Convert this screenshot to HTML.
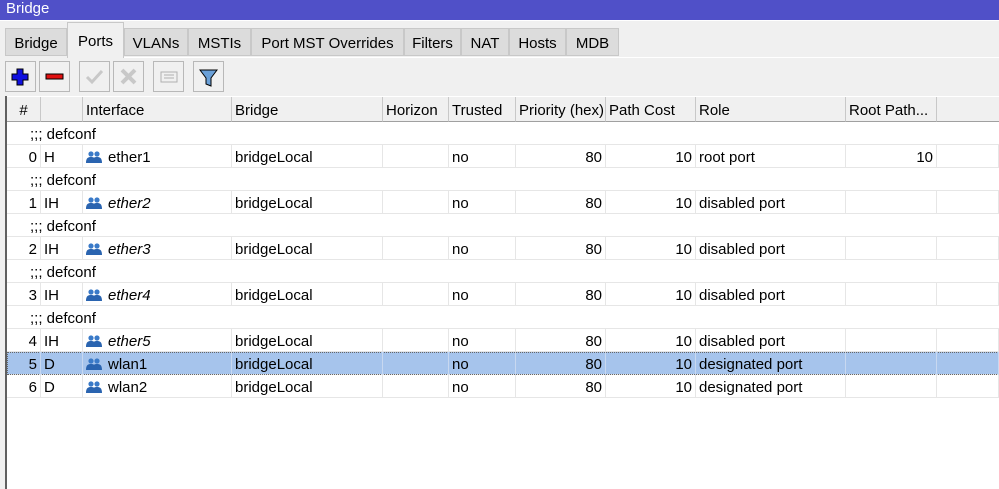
<!DOCTYPE html><html><head><style>
body{margin:0;width:999px;height:489px;background:#f0f0f0;font-family:"Liberation Sans",sans-serif;font-size:15px;color:#000;position:relative;overflow:hidden}
.a{position:absolute;white-space:nowrap}
.title{left:0;top:0;width:999px;height:20px;background:#5050c8;color:#fff;font-size:15px;line-height:18px;padding-left:6px;box-sizing:border-box}
.tab{top:28px;height:28px;background:#dcdcdc;border:1px solid #c8c8c8;line-height:30px;text-align:center;box-sizing:border-box}
.tb{top:61px;width:31px;height:31px;border:1px solid #b8b8b8;box-sizing:border-box;background:#f0f0f0}
.grid{left:5px;top:96px;width:994px;height:393px;background:#fff;border-left:2px solid #606060}
.h{top:97px;height:25px;line-height:27px;background:#f0f0f0;border-right:1px solid #c8c8c8;border-bottom:1px solid #a0a0a0;box-sizing:border-box;padding-left:3px}
.r{left:7px;width:992px;height:23px;border-bottom:1px solid #e6e6e6;box-sizing:border-box}
.c{height:23px;line-height:25px;border-right:1px solid #e6e6e6;box-sizing:border-box;padding:0 3px;overflow:hidden}
.ic{display:inline-block;width:16px;height:12px;vertical-align:-1px;margin-right:6px}
</style></head><body>
<div class="a title">Bridge</div>
<div class="a" style="left:0;top:20px;width:999px;height:1px;background:#fff"></div>
<div class="a tab" style="left:5px;width:62px">Bridge</div>
<div class="a tab" style="left:67px;top:22px;height:36px;width:57px;background:#f0f0f0;border-bottom:none;line-height:38px">Ports</div>
<div class="a tab" style="left:124px;width:64px">VLANs</div>
<div class="a tab" style="left:188px;width:63px">MSTIs</div>
<div class="a tab" style="left:251px;width:153px">Port MST Overrides</div>
<div class="a tab" style="left:404px;width:57px">Filters</div>
<div class="a tab" style="left:461px;width:48px">NAT</div>
<div class="a tab" style="left:509px;width:57px">Hosts</div>
<div class="a tab" style="left:566px;width:53px">MDB</div>
<div class="a" style="left:124px;top:57px;width:875px;height:1px;background:#fff"></div>
<div class="a tb" style="left:5px"><svg width="29" height="29"><path d="M11 7h6v5h5v6h-5v5h-6v-5H6v-6h5z" fill="#1010e0" stroke="#000" stroke-width="1"/></svg></div>
<div class="a tb" style="left:39px"><svg width="29" height="29"><rect x="6" y="12" width="17" height="5" fill="#e01010" stroke="#000"/></svg></div>
<div class="a tb" style="left:79px"><svg width="29" height="29"><path d="M7 15l5 5 10-11" fill="none" stroke="#c8c8c8" stroke-width="3"/></svg></div>
<div class="a tb" style="left:113px"><svg width="29" height="29"><path d="M8 8l13 13M21 8L8 21" stroke="#c8c8c8" stroke-width="4"/></svg></div>
<div class="a tb" style="left:153px"><svg width="29" height="29"><rect x="7" y="10" width="16" height="10" fill="none" stroke="#b0b0b0"/><path d="M10 13h10M10 16h10" stroke="#b0b0b0"/></svg></div>
<div class="a tb" style="left:193px"><svg width="29" height="29"><path d="M6 8h17l-6 8v8l-5-2v-6z" fill="#6aa0d8" stroke="#000"/></svg></div>
<div class="a grid"></div>
<div class="a h" style="left:7px;width:34px;text-align:center;padding:0">#</div>
<div class="a h" style="left:41px;width:42px"></div>
<div class="a h" style="left:83px;width:149px">Interface</div>
<div class="a h" style="left:232px;width:151px">Bridge</div>
<div class="a h" style="left:383px;width:66px">Horizon</div>
<div class="a h" style="left:449px;width:67px">Trusted</div>
<div class="a h" style="left:516px;width:90px">Priority (hex)</div>
<div class="a h" style="left:606px;width:90px">Path Cost</div>
<div class="a h" style="left:696px;width:150px">Role</div>
<div class="a h" style="left:846px;width:91px">Root Path...</div>
<div class="a h" style="left:937px;width:62px;border-right:none"></div>
<div id="rows"></div>
<script>
var ic='<svg class="ic" viewBox="0 0 16 12"><circle cx="5" cy="3" r="2.6" fill="#3a7ac8"/><circle cx="11" cy="3" r="2.6" fill="#3a7ac8"/><path d="M0 12c0-5 2-6 5-6s5 1 5 6zM6 12c0-5 2-6 5-6s5 1 5 6z" fill="#2a64b0"/></svg>';
var d=[["0","H","ether1",0,"root port","10"],["1","IH","ether2",1,"disabled port",""],["2","IH","ether3",1,"disabled port",""],["3","IH","ether4",1,"disabled port",""],["4","IH","ether5",1,"disabled port",""],["5","D","wlan1",0,"designated port",""],["6","D","wlan2",0,"designated port",""]];
var cols=[[7,34],[41,42],[83,149],[232,151],[383,66],[449,67],[516,90],[606,90],[696,150],[846,91],[937,62]];
var h='',y=122;
d.forEach(function(r,i){
 if(i<5){h+='<div class="a r" style="top:'+y+'px"><div class="a c" style="left:20px;border:none">;;; defconf</div></div>';y+=23;}
 var sel=i==5;
 var v=[r[0],r[1],ic+(r[3]?'<i>'+r[2]+'</i>':r[2]),'bridgeLocal','','no','80','10',r[4],r[5],''];
 h+='<div class="a r" style="top:'+y+'px;'+(sel?'background:#a6c4ec;outline:1px dotted #666;outline-offset:-1px;':'')+'">';
 v.forEach(function(t,j){var al=(j==0||j==6||j==7||j==9)?'text-align:right;':'';
  h+='<div class="a c" style="left:'+(cols[j][0]-7)+'px;width:'+cols[j][1]+'px;'+al+(sel?'border-right-color:#c8d8f0;':'')+'">'+t+'</div>';});
 h+='</div>';y+=23;
});
document.getElementById('rows').innerHTML=h;
</script>
</body></html>
